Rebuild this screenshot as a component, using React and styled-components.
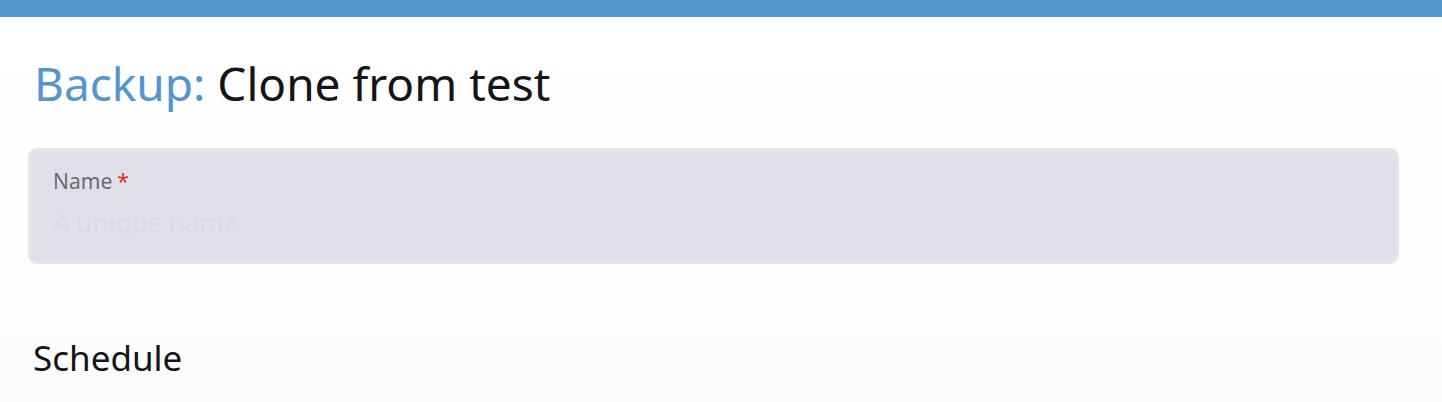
import React from 'react';
import styled, { createGlobalStyle } from 'styled-components';

const GlobalStyle = createGlobalStyle`
  html, body {
    margin: 0;
    padding: 0;
  }
  body {
    font-family: "Noto Sans", "Open Sans", sans-serif;
    background: linear-gradient(180deg, #ffffff 0%, #fcfcfc 100%);
    min-height: 402px;
  }
`;

const Page = styled.div`
  display: flex;
  flex-direction: column;
  min-height: 402px;
`;

const TopBar = styled.div`
  height: 17px;
  background: #5198d1;
`;

const Content = styled.div`
  display: flex;
  flex-direction: column;
  padding: 36px 43px 0 28px;
`;

const Title = styled.h1`
  margin: 0 0 0 6px;
  font-size: 46px;
  font-weight: 400;
  line-height: 60px;
  color: #141419;
`;

const Accent = styled.span`
  color: #5196d0;
`;

const Field = styled.div`
  margin-top: 35px;
  height: 116px;
  box-sizing: border-box;
  border: 3px solid #e4e5ea;
  border-radius: 9px;
  background: #dfe0e9;
  padding: 18px 22px 0;
  display: flex;
  flex-direction: column;
`;

const Label = styled.label`
  font-size: 21px;
  line-height: 24px;
  color: #6a6a74;
`;

const Required = styled.span`
  color: #e52a1f;
  margin-left: 5px;
`;

const Input = styled.input`
  border: none;
  outline: none;
  background: transparent;
  padding: 0;
  margin-top: 13px;
  font-family: inherit;
  font-size: 26px;
  line-height: 32px;
  height: 32px;
  color: #141419;

  &::placeholder {
    color: #d9dae2;
    opacity: 1;
  }
`;

const SectionTitle = styled.h3`
  margin: 72px 0 0 5px;
  font-size: 35px;
  font-weight: 400;
  line-height: 44px;
  color: #141419;
`;

export default function App() {
  return (
    <>
      <GlobalStyle />
      <Page>
        <TopBar />
        <Content>
          <Title>
            <Accent>Backup:</Accent> Clone from test
          </Title>
          <Field>
            <Label>
              Name<Required>*</Required>
            </Label>
            <Input placeholder="A unique name" />
          </Field>
          <SectionTitle>Schedule</SectionTitle>
        </Content>
      </Page>
    </>
  );
}
